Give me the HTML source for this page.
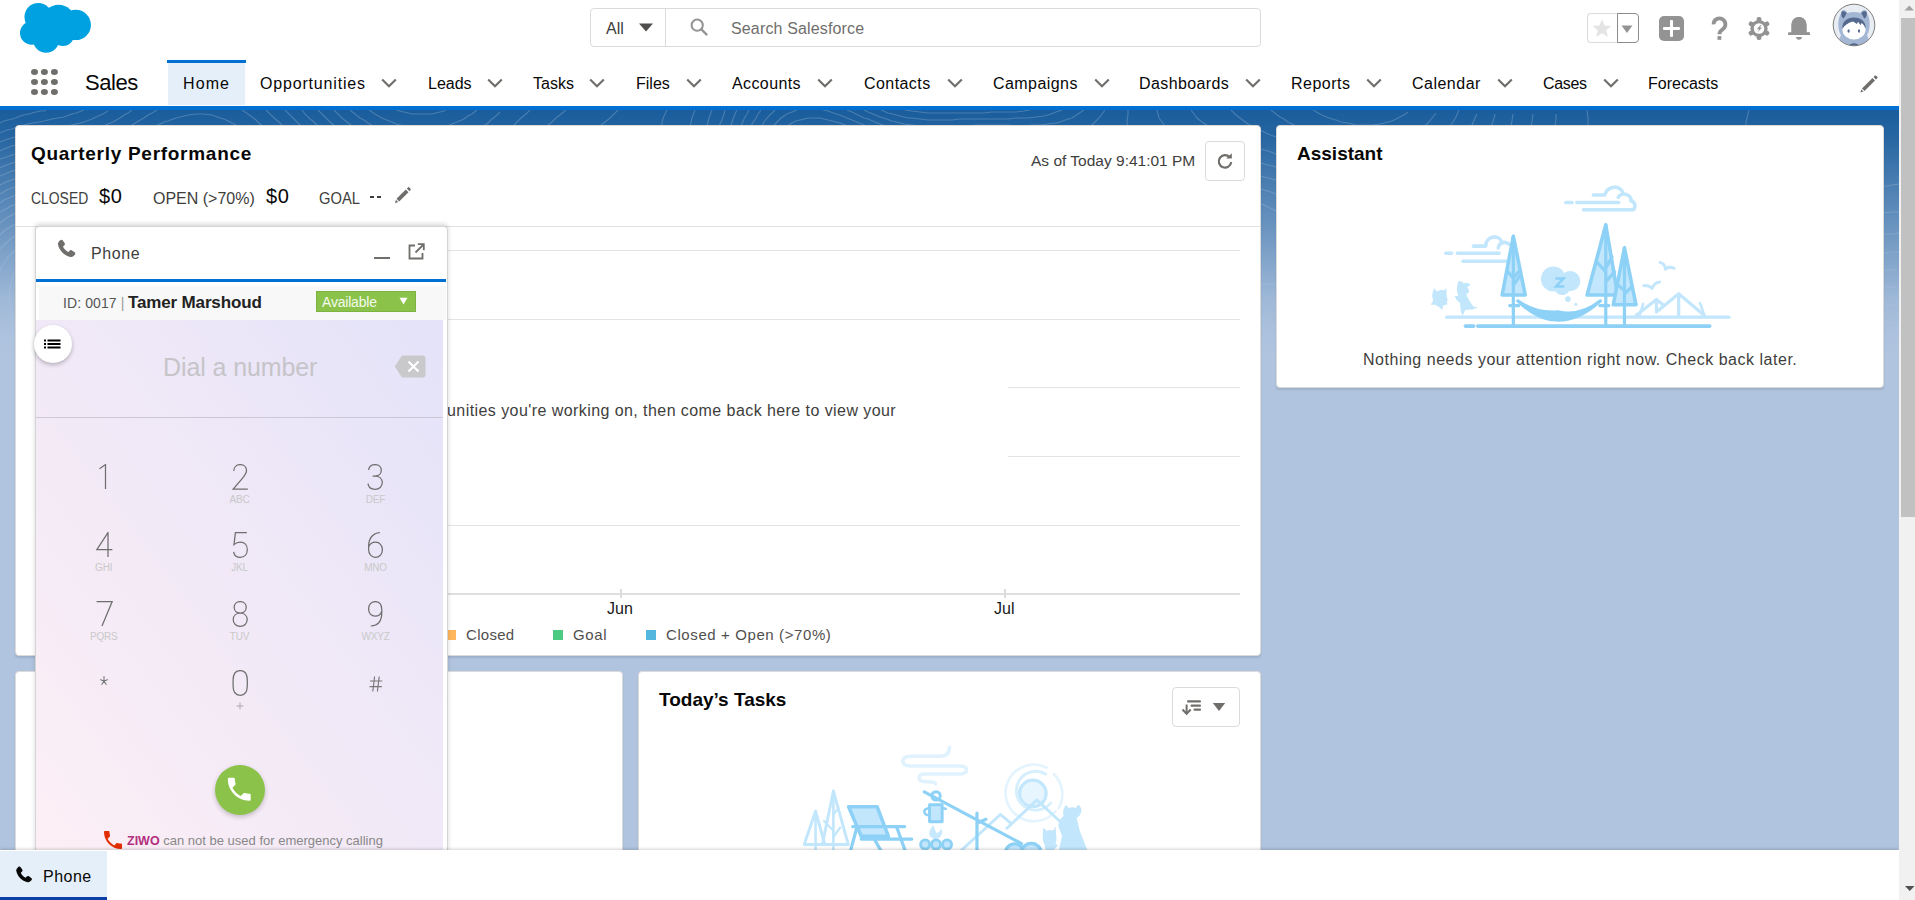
<!DOCTYPE html>
<html><head><meta charset="utf-8">
<style>
*{box-sizing:border-box;margin:0;padding:0}
html,body{width:1915px;height:900px;overflow:hidden;background:#b0c4df;font-family:"Liberation Sans",sans-serif;color:#080707}
.a{position:absolute;white-space:nowrap}
#hdr{position:absolute;left:0;top:0;width:1899px;height:106px;background:#fff}
#navline{position:absolute;left:0;top:106px;width:1899px;height:4px;background:#0070d2}
#band{position:absolute;left:0;top:110px;width:1899px;height:250px;background:#1a5d9c}
.card{position:absolute;background:#fff;border-radius:4px;border:1px solid #dddbda;box-shadow:0 2px 2px 0 rgba(0,0,0,0.1)}
#sb{position:absolute;left:1899px;top:0;width:16px;height:900px;background:#f1f1f1}
#util{position:absolute;left:0;top:850px;width:1899px;height:50px;background:#fff;box-shadow:0 -1px 3px rgba(0,0,0,0.18)}
.nv{position:absolute;top:74px;font-size:16px;line-height:20px;color:#080707;white-space:nowrap}
.chev{position:absolute;top:78px}
</style></head><body>
<div id="hdr">
 <!-- logo -->
 <svg class="a" style="left:0;top:0" width="100" height="56" viewBox="0 0 100 56">
  <g fill="#00a1e0">
   <circle cx="38.3" cy="17.4" r="13.4"/>
   <circle cx="58.6" cy="20.6" r="15.9"/>
   <circle cx="75.7" cy="24.9" r="15.2"/>
   <circle cx="31.8" cy="33" r="11.8"/>
   <circle cx="46.1" cy="39.8" r="13"/>
   <circle cx="62.9" cy="34.8" r="11.2"/>
   <rect x="30" y="18" width="42" height="22"/><circle cx="38.3" cy="16.8" r="13.8"/>
  </g>
 </svg>
 <!-- search -->
 <div class="a" style="left:590px;top:8px;width:671px;height:39px;border:1px solid #dddbda;border-radius:4px;background:#fff"></div>
 <div class="a" style="left:665px;top:9px;width:1px;height:37px;background:#dddbda"></div>
 <div class="a" style="left:606px;top:20px;font-size:16px;line-height:18px;color:#3e3e3c">All</div>
 <svg class="a" style="left:638px;top:23px" width="16" height="9" viewBox="0 0 16 9"><path d="M1 0.5H15L8 8.5Z" fill="#514f4d"/></svg>
 <svg class="a" style="left:690px;top:18px" width="18" height="18" viewBox="0 0 18 18"><circle cx="7.2" cy="7.2" r="5.6" fill="none" stroke="#939393" stroke-width="2"/><path d="M11.2 11.2L16.5 16.5" stroke="#939393" stroke-width="2.4" stroke-linecap="round"/></svg>
 <div class="a" style="left:731px;top:20px;font-size:16px;line-height:18px;color:#706e6b;letter-spacing:0.15px">Search Salesforce</div>
 <!-- right icons -->
 <div class="a" style="left:1587px;top:13px;width:31px;height:30px;border:1px solid #dddbda;border-right:none;border-radius:4px 0 0 4px;background:#fff"></div>
 <div class="a" style="left:1617px;top:13px;width:22px;height:30px;border:1px solid #8c8c8c;border-radius:0 4px 4px 0;background:#fff"></div>
 <svg class="a" style="left:1592px;top:18px" width="20" height="20" viewBox="0 0 20 20"><path d="M10 1.2L12.6 7.6L19.4 8L14.2 12.3L15.9 19L10 15.2L4.1 19L5.8 12.3L0.6 8L7.4 7.6Z" fill="#e4e4e4"/></svg>
 <svg class="a" style="left:1621px;top:25px" width="12" height="9" viewBox="0 0 12 9"><path d="M0.5 0.5H11.5L6 8Z" fill="#939393"/></svg>
 <div class="a" style="left:1659px;top:16px;width:25px;height:25px;background:#939393;border-radius:5px"></div>
 <div class="a" style="left:1663px;top:27px;width:17px;height:3px;background:#fff;border-radius:1px"></div>
 <div class="a" style="left:1670px;top:20px;width:3px;height:17px;background:#fff;border-radius:1px"></div>
 <svg class="a" style="left:1708px;top:15px" width="22" height="26" viewBox="0 0 22 26"><path d="M5.6 9.4A5.9 5.9 0 1 1 14.6 14.3C12.6 15.6 11.4 16.6 11.4 19.2" fill="none" stroke="#939393" stroke-width="3.8"/><rect x="9.5" y="21.1" width="3.8" height="3.7" fill="#939393"/></svg>
 <svg class="a" style="left:1747px;top:16px" width="24" height="25" viewBox="0 0 24 25">
  <g fill="#939393"><circle cx="12" cy="12.5" r="8.6"/>
  <rect x="9.6" y="1" width="4.8" height="5" rx="2"/><rect x="9.6" y="19" width="4.8" height="5" rx="2"/>
  <rect x="9.6" y="1" width="4.8" height="5" rx="2" transform="rotate(60 12 12.5)"/><rect x="9.6" y="19" width="4.8" height="5" rx="2" transform="rotate(60 12 12.5)"/>
  <rect x="9.6" y="1" width="4.8" height="5" rx="2" transform="rotate(-60 12 12.5)"/><rect x="9.6" y="19" width="4.8" height="5" rx="2" transform="rotate(-60 12 12.5)"/></g>
  <circle cx="12" cy="12.5" r="5.3" fill="#fff"/><path d="M13.6 8.9L9.8 13.3H12.2L10.6 16.2L15.1 11.6H12.7L14.6 8.9Z" fill="#939393"/>
 </svg>
 <svg class="a" style="left:1787px;top:16px" width="24" height="25" viewBox="0 0 24 25"><path d="M4.5 18.5V9.5C4.5 4.5 7.5 1 12 1C16.5 1 19.5 4.5 19.5 9.5V18.5H22.8V17.5C22.8 16.8 22.3 16.2 21.5 16.2H20.6V18.5Z" fill="#939393"/><path d="M4.5 9.5C4.5 4.5 7.5 1 12 1C16.5 1 19.5 4.5 19.5 9.5V16.2H22C22.5 16.2 23 16.7 23 17.3V19H1V17.3C1 16.7 1.5 16.2 2 16.2H4.5Z" fill="#939393"/><path d="M9 21H15C15 22.5 13.7 23.8 12 23.8C10.3 23.8 9 22.5 9 21Z" fill="#939393"/></svg>
 <svg class="a" style="left:1832px;top:3px" width="44" height="44" viewBox="0 0 44 44">
  <defs><clipPath id="avc"><circle cx="22" cy="22" r="20.5"/></clipPath></defs>
  <circle cx="22" cy="22" r="20.5" fill="#e8ecf3"/>
  <g clip-path="url(#avc)">
   <path d="M6 44C6 38 8 35 9 32C5.5 26 5.5 17 8.5 11.5L9.5 8C10.5 6.5 12.5 6.5 14 8L15.5 10C19.5 8.8 24.5 8.8 28.5 10L30 8C31.5 6.5 33.5 6.5 34.5 8L35.5 11.5C38.5 17 38.5 26 35 32C36 35 38 38 38 44Z" fill="#a3b6d4"/>
   <path d="M9.3 9.5C9 12.5 10 15 11.8 15.6L14.6 10.2C13 7.8 10.3 7.6 9.3 9.5Z" fill="#56698f"/>
   <path d="M34.7 9.5C35 12.5 34 15 32.2 15.6L29.4 10.2C31 7.8 33.7 7.6 34.7 9.5Z" fill="#56698f"/>
   <ellipse cx="22" cy="26.5" rx="11.6" ry="10" fill="#fff"/>
   <path d="M10.4 26C9.8 18.5 15 14.5 22 14.5C29 14.5 34.2 18.5 33.6 26C32.5 23 31.5 21 29.5 20L28.6 22.3L26 18.8L25 21L21 18.5C16.5 19.5 12.5 22 10.4 26Z" fill="#56698f"/>
   <ellipse cx="16.6" cy="28" rx="1.1" ry="1.7" fill="#56698f"/><ellipse cx="27" cy="28" rx="1.1" ry="1.7" fill="#56698f"/>
   <ellipse cx="22" cy="43.5" rx="4.5" ry="3.2" fill="#56698f"/>
  </g>
  <circle cx="22" cy="22" r="20.8" fill="none" stroke="#706e6b" stroke-width="0.9"/>
 </svg>
 <!-- nav -->
 <svg class="a" style="left:30px;top:68px" width="29" height="28" viewBox="0 0 29 28"><g fill="#706e6b">
  <ellipse cx="4.5" cy="3.9" rx="3.5" ry="3"/><ellipse cx="14.4" cy="3.9" rx="3.5" ry="3"/><ellipse cx="24.4" cy="3.9" rx="3.5" ry="3"/>
  <ellipse cx="4.5" cy="13.9" rx="3.5" ry="3"/><ellipse cx="14.4" cy="13.9" rx="3.5" ry="3"/><ellipse cx="24.4" cy="13.9" rx="3.5" ry="3"/>
  <ellipse cx="4.5" cy="24" rx="3.5" ry="3"/><ellipse cx="14.4" cy="24" rx="3.5" ry="3"/><ellipse cx="24.4" cy="24" rx="3.5" ry="3"/></g></svg>
 <div class="a" style="left:85px;top:70px;font-size:22px;line-height:26px;color:#080707;letter-spacing:-0.45px">Sales</div>
 <div class="a" style="left:167px;top:60px;width:79px;height:3px;background:#0070d2"></div>
 <div class="a" style="left:168px;top:63px;width:77px;height:42px;background:#e5eff9"></div>
 <div class="nv" style="left:183px;letter-spacing:1.1px">Home</div>
 <div class="nv" style="left:260px;letter-spacing:0.82px">Opportunities</div>
 <div class="nv" style="left:428px">Leads</div>
 <div class="nv" style="left:533px">Tasks</div>
 <div class="nv" style="left:636px">Files</div>
 <div class="nv" style="left:732px;letter-spacing:0.4px">Accounts</div>
 <div class="nv" style="left:864px;letter-spacing:0.43px">Contacts</div>
 <div class="nv" style="left:993px;letter-spacing:0.44px">Campaigns</div>
 <div class="nv" style="left:1139px;letter-spacing:0.4px">Dashboards</div>
 <div class="nv" style="left:1291px;letter-spacing:0.5px">Reports</div>
 <div class="nv" style="left:1412px;letter-spacing:0.49px">Calendar</div>
 <div class="nv" style="left:1543px;letter-spacing:-0.35px">Cases</div>
 <div class="nv" style="left:1648px">Forecasts</div>
 <svg class="a" style="left:381px;top:78px" width="16" height="10" viewBox="0 0 16 10"><path d="M1.2 1.5L8 8.3L14.8 1.5" fill="none" stroke="#706e6b" stroke-width="2.1"/></svg>
 <svg class="a" style="left:487px;top:78px" width="16" height="10" viewBox="0 0 16 10"><path d="M1.2 1.5L8 8.3L14.8 1.5" fill="none" stroke="#706e6b" stroke-width="2.1"/></svg>
 <svg class="a" style="left:589px;top:78px" width="16" height="10" viewBox="0 0 16 10"><path d="M1.2 1.5L8 8.3L14.8 1.5" fill="none" stroke="#706e6b" stroke-width="2.1"/></svg>
 <svg class="a" style="left:686px;top:78px" width="16" height="10" viewBox="0 0 16 10"><path d="M1.2 1.5L8 8.3L14.8 1.5" fill="none" stroke="#706e6b" stroke-width="2.1"/></svg>
 <svg class="a" style="left:817px;top:78px" width="16" height="10" viewBox="0 0 16 10"><path d="M1.2 1.5L8 8.3L14.8 1.5" fill="none" stroke="#706e6b" stroke-width="2.1"/></svg>
 <svg class="a" style="left:947px;top:78px" width="16" height="10" viewBox="0 0 16 10"><path d="M1.2 1.5L8 8.3L14.8 1.5" fill="none" stroke="#706e6b" stroke-width="2.1"/></svg>
 <svg class="a" style="left:1094px;top:78px" width="16" height="10" viewBox="0 0 16 10"><path d="M1.2 1.5L8 8.3L14.8 1.5" fill="none" stroke="#706e6b" stroke-width="2.1"/></svg>
 <svg class="a" style="left:1245px;top:78px" width="16" height="10" viewBox="0 0 16 10"><path d="M1.2 1.5L8 8.3L14.8 1.5" fill="none" stroke="#706e6b" stroke-width="2.1"/></svg>
 <svg class="a" style="left:1366px;top:78px" width="16" height="10" viewBox="0 0 16 10"><path d="M1.2 1.5L8 8.3L14.8 1.5" fill="none" stroke="#706e6b" stroke-width="2.1"/></svg>
 <svg class="a" style="left:1497px;top:78px" width="16" height="10" viewBox="0 0 16 10"><path d="M1.2 1.5L8 8.3L14.8 1.5" fill="none" stroke="#706e6b" stroke-width="2.1"/></svg>
 <svg class="a" style="left:1603px;top:78px" width="16" height="10" viewBox="0 0 16 10"><path d="M1.2 1.5L8 8.3L14.8 1.5" fill="none" stroke="#706e6b" stroke-width="2.1"/></svg>
 <svg class="a" style="left:1859px;top:74px" width="20" height="20" viewBox="0 0 20 20"><path d="M3 14.5L13.5 4L16 6.5L5.5 17Z" fill="#706e6b"/><path d="M14.5 3L15.8 1.7C16.2 1.3 16.8 1.3 17.2 1.7L18.3 2.8C18.7 3.2 18.7 3.8 18.3 4.2L17 5.5Z" fill="#706e6b"/><path d="M2.4 15.5L4.5 17.6L1.4 18.6Z" fill="#706e6b"/></svg>
</div>
<div id="navline"></div>
<div id="band"></div>
<svg class="a" style="left:0;top:110px" width="1899" height="250" viewBox="0 0 1899 250"><g fill="none" stroke="rgba(255,255,255,0.2)" stroke-width="1.1"><path d="M975,184 980,183 985,180 989,176 992,170 993,164 992,156 990,152 988,148 984,143 980,140 973,136 968,135 960,134 952,136 948,137 943,140 939,144 936,149 935,156 936,160 940,167 944,172 948,176 952,178 956,181 964,183 968,184 975,184"/><path d="M986,196 992,193 996,191 1000,187 1004,181 1006,176 1007,168 1007,160 1005,152 1003,148 1000,142 996,136 993,132 988,128 984,125 980,123 973,120 968,119 960,118 952,118 944,120 940,120 932,123 928,124 920,128 916,130 912,132 908,136 904,144 906,152 908,156 912,161 916,166 920,171 924,175 928,179 932,182 936,185 940,188 947,192 952,194 957,196 964,198 972,198 980,198 986,196"/><path d="M985,208 992,206 996,204 1002,200 1007,196 1010,192 1013,188 1016,181 1017,176 1018,168 1017,160 1016,154 1014,148 1012,143 1008,136 1006,132 1003,128 1000,124 996,120 991,116 985,112 980,109 976,108 968,106 960,105 952,105 944,106 936,107 930,108 924,109 916,110 908,111 900,111 892,110 884,109 880,108 872,105 868,104 860,101 856,100 848,99 842,100 837,104 835,108 835,116 836,120 840,127 844,132 848,136 852,140 856,143 860,146 864,149 870,152 876,156 880,159 884,161 888,164 894,168 899,172 904,176 908,179 912,182 916,185 920,188 926,192 932,196 936,198 940,200 948,204 952,206 960,208 964,209 972,209 980,209 985,208"/><path d="M992,216 996,214 1001,212 1008,208 1012,204 1016,200 1019,196 1022,192 1024,187 1026,180 1027,172 1027,164 1025,156 1024,151 1022,144 1020,140 1016,132 1014,128 1011,124 1008,119 1004,114 1000,110 996,107 992,104 986,100 980,98 975,96 968,95 960,94 952,94 944,95 936,95 928,96 924,96 916,97 908,97 901,96 896,95 888,93 883,92 876,90 872,88 864,85 860,84 852,81 846,80 840,79 834,80 828,82 824,85 820,90 818,96 817,104 818,112 820,120 822,124 824,128 828,134 832,139 836,144 840,148 844,151 848,155 852,157 856,160 862,164 868,168 872,170 876,173 882,176 888,180 892,182 896,185 901,188 907,192 912,195 916,198 920,200 926,204 932,207 936,209 942,212 948,214 954,216 960,217 968,219 976,219 984,218 992,216"/><path d="M995,224 1000,222 1005,220 1012,216 1016,213 1020,209 1024,205 1028,200 1030,196 1032,191 1034,184 1035,176 1035,168 1034,160 1032,152 1031,148 1028,140 1027,136 1024,130 1021,124 1018,120 1016,116 1012,110 1008,105 1004,101 1000,97 996,94 992,92 984,88 980,87 972,85 964,84 960,84 952,84 948,84 940,85 932,85 924,86 916,86 908,85 900,84 896,83 888,81 884,80 876,77 872,76 864,73 860,72 852,69 848,68 840,66 832,66 824,68 820,69 816,72 812,76 808,84 807,88 806,96 806,104 807,112 808,116 811,124 813,128 816,133 820,139 824,144 827,148 831,152 835,156 839,160 844,164 848,167 852,170 856,173 861,176 868,180 872,182 876,185 881,188 888,192 892,194 896,197 901,200 908,204 912,206 916,209 922,212 928,215 932,217 939,220 944,222 950,224 956,226 964,227 972,227 980,227 988,226 995,224"/><path d="M998,232 1004,230 1008,228 1015,224 1020,221 1024,217 1028,213 1032,209 1035,204 1038,200 1040,195 1042,188 1043,180 1044,172 1043,164 1041,156 1040,152 1038,144 1036,140 1033,132 1031,128 1028,122 1025,116 1023,112 1020,107 1016,101 1012,96 1008,92 1004,88 1000,85 996,83 991,80 984,78 977,76 972,75 964,75 956,75 948,75 940,75 932,76 924,76 916,76 908,75 900,74 892,72 888,71 880,69 876,67 868,64 864,63 856,60 852,59 844,56 840,56 832,55 824,55 820,56 812,60 808,63 804,68 801,72 800,76 797,84 797,92 797,100 798,108 800,116 801,120 804,126 807,132 809,136 812,140 816,146 820,151 824,156 828,160 832,164 836,168 840,171 844,174 848,177 852,180 857,184 863,188 868,191 872,193 877,196 883,200 888,203 892,205 897,208 904,212 908,214 912,216 919,220 924,223 928,225 936,228 940,230 947,232 952,233 960,235 968,236 976,236 984,235 992,234 998,232"/><path d="M1313,0 1320,4 1324,6 1329,8 1336,10 1341,12 1348,13 1356,15 1364,15 1372,15 1380,14 1388,12 1392,11 1398,8 1404,5 1408,2"/><path d="M978,244 984,243 992,242 1000,240 1004,239 1010,236 1016,233 1020,231 1024,228 1029,224 1034,220 1037,216 1040,212 1044,206 1047,200 1049,196 1051,188 1052,180 1051,172 1050,164 1049,156 1047,152 1045,144 1043,140 1040,132 1039,128 1036,122 1033,116 1031,112 1028,105 1025,100 1023,96 1020,92 1016,86 1012,82 1008,79 1004,76 997,72 992,70 985,68 980,67 972,66 964,66 956,66 948,66 940,67 932,67 924,67 916,67 908,66 900,65 896,64 888,62 882,60 876,58 870,56 864,54 860,52 852,49 847,48 840,46 832,45 824,45 816,46 811,48 804,52 800,56 797,60 795,64 792,70 790,76 789,84 789,92 789,100 791,108 792,113 794,120 796,124 800,132 802,136 804,140 808,146 812,151 816,156 819,160 822,164 826,168 830,172 835,176 839,180 844,184 848,187 852,190 856,193 860,196 867,200 872,203 876,206 880,208 886,212 892,215 896,218 900,220 908,224 912,226 916,228 924,232 928,234 933,236 940,239 945,240 952,242 960,243 967,244 972,244 978,244"/><path d="M1271,0 1276,4 1280,7 1284,9 1288,12 1296,16 1300,18 1305,20 1312,23 1316,24 1324,27 1328,28 1336,30 1344,32 1348,32 1356,33 1364,34 1372,34 1380,34 1388,33 1392,32 1400,30 1405,28 1412,25 1416,22 1420,20 1425,16 1429,12 1432,8 1436,3"/><path d="M981,252 988,251 996,250 1001,248 1008,246 1012,244 1020,240 1024,238 1028,236 1033,232 1038,228 1042,224 1046,220 1049,216 1052,211 1055,204 1057,200 1059,192 1060,184 1060,176 1059,168 1057,160 1056,156 1054,148 1052,143 1049,136 1048,132 1045,124 1043,120 1040,113 1038,108 1036,103 1033,96 1031,92 1028,87 1024,81 1020,76 1016,72 1012,69 1008,67 1002,64 996,62 990,60 984,59 976,58 968,58 960,58 952,58 944,58 936,59 928,59 920,59 912,58 904,57 898,56 892,55 884,52 880,51 872,48 868,47 861,44 856,42 849,40 844,38 836,36 832,36 824,35 816,36 812,37 804,40 800,42 796,46 792,51 789,56 787,60 784,68 783,72 782,80 781,88 782,96 783,104 784,108 786,116 788,121 791,128 793,132 796,138 800,144 802,148 805,152 808,156 812,161 816,166 820,170 824,175 828,179 832,183 836,186 840,190 844,193 848,196 853,200 858,204 864,208 868,211 872,213 876,216 883,220 888,223 892,225 897,228 904,232 908,234 912,236 920,240 924,242 930,244 936,246 942,248 948,250 956,251 962,252"/><path d="M1231,0 1235,4 1240,8 1244,11 1248,14 1252,16 1260,20 1264,22 1268,24 1276,27 1280,29 1288,32 1292,33 1300,36 1304,37 1312,40 1316,41 1324,43 1328,44 1336,46 1344,47 1348,48 1356,49 1364,50 1372,50 1380,50 1388,50 1396,49 1400,48 1408,46 1414,44 1420,41 1424,39 1430,36 1435,32 1440,28 1444,24 1447,20 1450,16 1453,12 1456,7 1459,0"/><path d="M1015,252 1020,250 1024,248 1031,244 1036,241 1040,238 1044,235 1048,232 1052,227 1056,223 1060,217 1063,212 1064,208 1067,200 1068,195 1069,188 1069,180 1068,174 1067,168 1065,160 1064,156 1061,148 1060,144 1057,136 1055,132 1052,124 1051,120 1048,113 1046,108 1044,102 1042,96 1040,91 1037,84 1035,80 1032,75 1028,70 1024,66 1020,63 1016,60 1008,56 1004,55 996,53 992,52 984,51 976,50 968,50 960,50 952,50 944,51 936,51 928,51 920,51 912,50 904,49 897,48 892,47 884,44 880,43 872,40 868,39 861,36 856,34 850,32 844,30 836,28 832,27 824,26 816,26 808,28 804,29 798,32 793,36 789,40 786,44 783,48 780,54 778,60 776,68 775,72 775,80 775,88 776,96 776,100 778,108 780,115 782,120 784,126 787,132 789,136 792,141 796,148 799,152 801,156 804,160 808,165 812,170 816,174 820,179 824,183 828,187 832,191 836,195 840,199 844,202 848,206 852,209 856,212 861,216 867,220 872,223 876,226 880,229 886,232 892,236 896,238 900,240 908,244 912,246 916,248 924,251"/><path d="M1191,0 1194,4 1197,8 1202,12 1208,16 1212,19 1216,21 1222,24 1228,26 1232,28 1240,31 1244,33 1252,36 1256,37 1264,40 1268,41 1276,44 1280,45 1288,47 1292,48 1300,51 1304,52 1312,54 1319,56 1324,57 1332,59 1336,60 1344,62 1352,63 1360,64 1364,64 1372,65 1380,65 1388,65 1396,65 1403,64 1408,63 1416,62 1421,60 1428,58 1432,56 1439,52 1444,49 1448,46 1452,43 1456,39 1460,34 1464,29 1467,24 1470,20 1472,15 1475,8 1477,4"/><path d="M1037,252 1044,248 1048,245 1052,242 1056,239 1060,235 1064,231 1068,225 1071,220 1073,216 1076,209 1077,204 1079,196 1079,188 1078,180 1076,172 1075,168 1073,160 1072,156 1069,148 1067,144 1064,136 1063,132 1060,125 1058,120 1056,113 1054,108 1052,100 1051,96 1048,88 1047,84 1044,76 1043,72 1040,67 1036,62 1032,58 1028,55 1023,52 1016,49 1012,48 1004,46 996,44 992,44 984,43 976,43 968,43 960,43 952,43 944,43 936,44 928,44 920,44 912,43 904,42 896,40 892,39 884,37 880,36 872,33 868,31 860,28 856,27 849,24 844,22 837,20 832,19 824,17 816,17 808,18 800,20 796,22 792,24 787,28 783,32 780,37 776,43 774,48 772,53 770,60 769,68 768,76 768,84 769,92 770,100 772,108 773,112 776,120 777,124 780,130 783,136 785,140 788,145 792,151 795,156 798,160 801,164 804,168 808,173 812,178 816,183 820,187 824,192 828,196 832,200 836,204 840,208 844,212 848,216 852,219 856,222 860,226 864,229 869,232 875,236 880,239 884,242 888,244 895,248 900,251"/><path d="M1157,0 1159,8 1162,12 1165,16 1171,20 1176,23 1180,25 1185,28 1192,31 1196,32 1204,35 1208,37 1216,39 1220,41 1228,43 1232,44 1240,47 1244,48 1252,50 1258,52 1264,54 1272,56 1276,57 1284,60 1288,61 1296,63 1300,64 1308,67 1313,68 1320,70 1328,72 1332,73 1340,75 1347,76 1352,77 1360,78 1368,79 1373,80 1380,81 1388,81 1396,81 1404,81 1412,80 1416,79 1424,78 1432,76 1436,75 1443,72 1448,70 1452,67 1457,64 1462,60 1467,56 1471,52 1474,48 1477,44 1480,40 1484,33 1486,28 1488,24 1491,16 1493,12 1495,4"/><path d="M1060,252 1064,249 1068,246 1072,243 1076,239 1080,234 1084,228 1086,224 1088,219 1090,212 1091,204 1091,196 1090,188 1089,180 1088,176 1085,168 1083,164 1080,156 1079,152 1076,146 1074,140 1072,136 1069,128 1067,124 1065,116 1064,112 1062,104 1060,97 1059,92 1058,84 1056,76 1055,72 1053,64 1051,60 1048,56 1044,52 1038,48 1032,45 1028,43 1020,41 1016,40 1008,38 1000,37 992,36 988,36 980,35 972,35 964,36 956,36 952,36 944,36 936,37 928,37 920,36 914,36 908,35 900,34 892,32 888,31 880,28 876,27 868,24 864,22 858,20 852,17 848,16 840,13 836,12 828,10 820,8 816,8 809,8 804,9 796,11 792,13 787,16 782,20 778,24 775,28 772,33 769,40 767,44 764,52 764,56 762,64 762,72 762,80 762,88 763,96 764,100 766,108 768,114 770,120 772,124 776,132 778,136 780,140 784,147 787,152 790,156 792,160 796,165 800,171 804,176 807,180 810,184 813,188 817,192 820,196 824,201 828,205 832,210 836,214 840,218 844,222 848,226 852,230 856,233 860,237 864,240 870,244 875,248 880,251"/><path d="M1213,252 1212,252 1208,252 1204,251 1200,251 1196,252 1193,252"/><path d="M797,0 792,2 787,4 781,8 777,12 773,16 770,20 767,24 764,30 761,36 760,40 758,48 756,56 756,60 755,68 755,76 756,84 756,88 757,96 759,104 760,108 763,116 765,120 768,128 770,132 772,136 776,143 779,148 781,152 784,156 788,162 792,168 795,172 798,176 801,180 804,184 808,190 812,195 816,200 819,204 822,208 825,212 829,216 832,220 836,225 840,229 844,234 848,238 852,242 856,246 860,250"/><path d="M1274,252 1269,248 1264,244 1260,241 1256,239 1252,236 1244,232 1240,230 1234,228 1228,226 1220,225 1216,224 1208,223 1200,223 1192,224 1188,224 1180,225 1172,227 1167,228 1160,230 1152,232 1148,233 1140,235 1132,236 1128,236 1124,236 1119,232 1116,227 1114,220 1112,212 1111,208 1109,200 1108,196 1105,188 1103,184 1100,177 1098,172 1096,168 1092,160 1090,156 1088,152 1084,144 1082,140 1080,135 1077,128 1076,124 1073,116 1072,111 1071,104 1069,96 1069,88 1069,80 1069,72 1069,64 1068,58 1066,52 1064,48 1060,44 1053,40 1048,38 1042,36 1036,35 1028,33 1023,32 1016,31 1008,30 1000,29 992,29 984,29 976,29 968,29 960,29 952,29 944,30 936,30 928,30 920,30 912,29 906,28 900,27 892,25 888,24 880,21 876,20 868,17 864,15 857,12 852,10 847,8 840,5 836,4 828,1 823,0"/><path d="M1128,0 1128,4 1127,12 1128,17 1132,23 1136,27 1140,29 1146,32 1152,34 1156,36 1164,39 1169,40 1176,42 1182,44 1188,46 1196,48 1200,49 1208,51 1212,52 1220,54 1226,56 1232,58 1240,60 1244,61 1252,63 1256,64 1264,67 1268,68 1276,70 1282,72 1288,74 1295,76 1300,78 1308,80 1312,81 1320,84 1324,85 1332,87 1336,88 1344,90 1351,92 1356,93 1364,95 1372,96 1376,97 1384,97 1392,98 1400,99 1408,99 1416,99 1424,98 1432,97 1438,96 1444,95 1452,92 1456,91 1461,88 1468,84 1472,81 1476,78 1480,74 1484,70 1488,65 1492,60 1494,56 1497,52 1500,46 1503,40 1504,36 1507,28 1509,24 1511,16 1512,11 1513,4"/><path d="M775,0 771,4 767,8 764,12 760,19 757,24 756,28 753,36 752,40 750,48 749,56 748,64 748,72 749,80 750,88 751,96 752,100 755,108 756,112 759,120 761,124 764,131 767,136 769,140 772,145 776,152 778,156 781,160 784,164 788,170 792,176 795,180 798,184 801,188 804,193 808,198 812,204 815,208 818,212 821,216 824,221 828,226 832,232 835,236 838,240 841,244 844,248"/><path d="M1105,0 1102,4 1099,8 1095,12 1091,16 1085,20 1080,23 1074,24 1068,25 1060,25 1052,25 1044,25 1036,24 1030,24 1024,24 1016,23 1008,23 1000,22 992,22 984,22 976,22 968,22 960,22 952,23 944,23 936,23 928,23 920,23 912,22 904,21 900,20 892,18 886,16 880,14 875,12 868,9 864,8 856,4 852,2 847,0"/><path d="M1310,252 1307,248 1304,244 1300,239 1296,235 1292,230 1288,226 1284,222 1280,219 1276,216 1271,212 1264,208 1260,206 1255,204 1248,201 1243,200 1236,198 1228,197 1220,197 1212,196 1204,196 1196,197 1188,197 1180,198 1172,198 1164,198 1156,198 1148,197 1143,196 1136,193 1132,191 1128,188 1124,184 1120,180 1116,176 1112,171 1108,166 1104,160 1101,156 1099,152 1096,147 1092,140 1090,136 1088,132 1085,124 1084,120 1082,112 1080,104 1080,100 1080,93 1080,88 1082,80 1084,73 1086,68 1089,64 1092,59 1096,55 1101,52 1108,49 1116,48 1120,48 1126,48 1132,48 1140,49 1148,51 1156,52 1160,53 1168,54 1176,56 1180,57 1188,59 1193,60 1200,62 1208,64 1212,65 1220,67 1224,68 1232,70 1239,72 1244,74 1252,76 1256,77 1264,80 1268,81 1276,84 1280,85 1288,88 1292,90 1299,92 1304,94 1309,96 1316,98 1320,100 1328,103 1332,104 1340,107 1344,108 1352,110 1358,112 1364,114 1372,115 1376,116 1384,118 1392,119 1400,120 1404,121 1412,121 1420,122 1428,123 1436,123 1444,123 1452,122 1460,121 1465,120 1472,117 1476,115 1482,112 1487,108 1491,104 1495,100 1498,96 1501,92 1504,88 1508,82 1511,76 1513,72 1516,66 1519,60 1520,56 1523,48 1525,44 1527,36 1528,32 1530,24 1531,16 1532,12 1533,4"/><path d="M761,0 758,4 756,8 752,14 749,20 748,24 745,32 744,37 743,44 742,52 741,60 741,68 742,76 743,84 744,90 745,96 748,104 749,108 752,116 753,120 756,126 759,132 761,136 764,141 768,148 771,152 773,156 776,160 780,166 784,172 786,176 789,180 792,184 796,190 800,196 803,200 806,204 808,208 812,214 816,220 818,224 821,228 824,233 828,240 830,244 833,248"/><path d="M1084,0 1078,4 1072,8 1068,9 1060,12 1056,13 1048,14 1040,15 1032,15 1024,16 1016,16 1008,15 1000,15 992,15 984,15 976,15 968,16 960,16 956,16 948,16 940,17 932,17 924,16 920,16 912,15 904,14 896,12 892,11 884,8 880,7 873,4 868,2 864,0"/><path d="M1526,252 1525,244 1524,240 1523,232 1521,224 1520,217 1519,212 1518,204 1516,196 1516,192 1515,184 1515,176 1516,168 1516,164 1518,156 1520,148 1521,144 1523,136 1524,132 1527,124 1528,120 1531,112 1532,108 1535,100 1537,96 1539,88 1541,84 1543,76 1544,72 1546,64 1548,58 1549,52 1551,44 1552,39 1553,32 1554,24 1555,16 1556,9 1556,4"/><path d="M1348,252 1346,248 1344,244 1340,237 1337,232 1335,228 1332,223 1328,216 1326,212 1323,208 1320,203 1316,198 1312,193 1308,190 1304,186 1300,184 1292,180 1288,178 1280,176 1276,175 1268,174 1260,173 1252,172 1244,172 1236,172 1228,173 1220,173 1212,174 1204,174 1196,175 1188,176 1183,176 1176,176 1168,177 1160,176 1156,176 1148,174 1141,172 1136,170 1132,168 1126,164 1121,160 1117,156 1113,152 1109,148 1106,144 1104,140 1100,134 1097,128 1095,124 1093,116 1092,111 1091,104 1092,96 1093,92 1096,84 1099,80 1102,76 1107,72 1112,69 1116,67 1124,65 1132,64 1140,64 1148,64 1156,65 1164,66 1172,68 1176,68 1184,70 1192,72 1196,73 1204,75 1208,76 1216,78 1222,80 1228,82 1234,84 1240,86 1246,88 1252,90 1256,92 1264,95 1268,97 1274,100 1280,103 1284,105 1290,108 1296,111 1300,113 1305,116 1312,120 1316,123 1320,125 1326,128 1332,131 1336,133 1342,136 1348,139 1352,140 1360,143 1365,144 1372,146 1380,148 1384,149 1392,151 1397,152 1404,154 1411,156 1416,158 1421,160 1428,163 1432,165 1436,168 1441,172 1446,176 1449,180 1452,184 1456,192 1457,196 1459,204 1459,212 1459,220 1458,228 1456,236 1456,240 1454,248"/><path d="M396,0 396,0 400,1 404,2 408,3 412,4 414,4 416,4 420,4 424,4 428,4 429,4 432,4 436,3 440,2 444,1 446,0"/><path d="M749,0 747,4 744,9 741,16 740,20 737,28 736,33 735,40 734,48 734,56 734,64 734,72 735,80 736,84 738,92 740,100 741,104 744,111 746,116 748,121 751,128 754,132 756,137 760,143 763,148 765,152 768,156 772,163 776,168 778,172 781,176 784,180 788,186 792,192 794,196 797,200 800,205 804,212 806,216 809,220 812,226 815,232 817,236 820,242 823,248 824,252"/><path d="M1062,0 1056,2 1051,4 1044,6 1036,7 1028,8 1024,8 1016,8 1008,9 1000,9 992,9 984,9 976,9 968,9 960,9 952,10 944,10 936,10 928,10 920,9 912,8 908,8 900,6 893,4 888,3 881,0"/><path d="M1567,252 1567,244 1568,237 1568,232 1569,224 1570,216 1570,208 1571,200 1572,192 1572,187 1573,180 1573,172 1574,164 1575,156 1575,148 1576,142 1577,136 1578,128 1579,120 1580,112 1580,108 1581,100 1583,92 1584,84 1584,80 1585,72 1586,64 1587,56 1587,48 1587,40 1588,32 1588,24 1588,16 1588,8 1587,0"/><path d="M1749,0 1748,4 1746,12 1746,20 1747,28 1748,34 1750,40 1752,44 1756,49 1760,54 1764,57 1768,60 1774,64 1780,67 1784,69 1792,72 1796,73 1804,75 1810,76 1816,77 1824,78 1832,79 1840,79 1848,79 1856,79 1864,78 1872,78 1880,77 1887,76 1892,75 1900,74"/><path d="M1192,157 1184,158 1176,158 1168,158 1160,158 1152,157 1147,156 1140,154 1136,152 1129,148 1124,144 1120,140 1116,136 1113,132 1111,128 1108,122 1106,116 1105,108 1106,100 1108,95 1112,90 1116,86 1120,83 1128,80 1132,79 1140,78 1148,78 1156,78 1164,79 1170,80 1176,81 1184,83 1189,84 1196,86 1202,88 1208,90 1214,92 1220,95 1224,96 1232,100 1236,102 1240,105 1245,108 1250,112 1254,116 1257,120 1260,128 1256,136 1252,139 1248,142 1243,144 1236,147 1232,148 1224,150 1216,152 1212,153 1204,154 1196,156 1192,157"/><path d="M369,0 375,4 380,7 384,9 392,12 396,14 404,16 408,17 416,18 424,19 432,19 440,18 447,16 452,14 457,12 464,9 468,6 472,4 477,0"/><path d="M737,0 735,4 732,12 731,16 728,24 728,28 726,36 726,44 725,52 726,60 726,68 728,76 728,80 730,88 732,95 734,100 736,107 738,112 740,116 744,124 746,128 748,132 752,139 755,144 757,148 760,152 764,159 768,164 770,168 773,172 776,177 780,183 783,188 786,192 789,196 792,202 796,208 798,212 800,216 804,224 806,228 808,233 811,240 812,244 815,252"/><path d="M1030,0 1024,1 1016,2 1008,2 1000,2 992,2 984,3 976,3 968,3 960,3 952,3 944,3 936,3 928,3 920,2 912,1 905,0"/><path d="M1184,137 1176,138 1168,139 1160,139 1152,138 1145,136 1140,134 1136,131 1132,128 1128,123 1125,116 1126,108 1128,103 1132,99 1139,96 1144,95 1152,94 1160,94 1168,95 1172,96 1180,99 1184,100 1192,104 1196,106 1200,109 1204,113 1206,120 1204,126 1200,130 1196,132 1188,135 1184,137"/><path d="M1610,252 1612,247 1615,240 1616,236 1619,228 1621,224 1624,217 1626,212 1628,208 1631,200 1633,196 1636,190 1639,184 1641,180 1644,174 1647,168 1649,164 1652,159 1656,153 1659,148 1662,144 1665,140 1668,136 1672,131 1676,127 1680,123 1684,120 1690,116 1696,113 1700,111 1708,108 1712,107 1720,106 1728,105 1736,104 1744,104 1752,104 1760,104 1768,104 1776,105 1784,105 1792,105 1800,105 1808,106 1816,106 1824,106 1832,106 1840,106 1848,105 1856,105 1864,105 1872,104 1876,104 1884,103 1892,102 1900,102"/><path d="M540,224 544,219 546,212 546,204 544,196 542,192 538,188 532,185 524,187 521,192 520,196 520,204 521,208 524,216 527,220 531,224 536,226 540,224"/><path d="M350,0 355,4 360,8 364,10 368,13 373,16 380,20 384,22 389,24 396,27 400,28 408,31 414,32 420,33 428,34 436,35 444,34 452,33 456,32 464,28 468,27 472,24 479,20 484,16 488,13 492,9 496,6 500,2"/><path d="M725,0 724,4 721,12 719,16 718,24 716,32 716,39 716,44 716,49 716,56 717,64 719,72 720,78 721,84 724,92 725,96 728,104 730,108 732,113 735,120 737,124 740,129 744,136 746,140 749,144 752,149 756,155 759,160 762,164 765,168 768,173 772,179 775,184 778,188 780,192 784,198 788,204 790,208 792,212 796,220 797,224 800,231 802,236 804,243 805,248"/><path d="M1645,252 1648,244 1650,240 1652,236 1656,228 1658,224 1660,220 1664,213 1667,208 1669,204 1672,200 1676,194 1680,188 1683,184 1686,180 1690,176 1693,172 1697,168 1701,164 1706,160 1711,156 1716,152 1720,150 1724,147 1731,144 1736,142 1740,140 1748,137 1753,136 1760,134 1768,133 1773,132 1780,131 1788,130 1796,129 1804,129 1812,128 1817,128 1824,128 1832,127 1840,127 1848,126 1856,126 1864,125 1872,125 1880,124 1885,124 1892,124 1900,123"/><path d="M572,252 573,248 573,240 574,232 575,224 575,216 574,208 573,200 572,193 571,188 568,181 566,176 564,172 560,167 556,162 552,158 548,154 544,152 537,148 532,146 524,144 520,144 516,144 508,147 504,150 500,155 497,160 495,164 493,172 492,180 492,188 493,196 494,204 495,212 496,216 498,224 500,232 501,236 504,244 505,248"/><path d="M334,0 338,4 342,8 347,12 352,16 356,18 360,21 364,24 371,28 376,31 380,33 387,36 392,39 396,40 404,43 408,45 416,48 420,49 428,51 432,52 440,54 448,55 456,55 464,54 472,52 476,50 480,48 485,44 490,40 494,36 498,32 502,28 506,24 510,20 513,16 517,12 521,8 526,4 530,0"/><path d="M712,0 709,8 708,12 706,20 705,28 704,36 705,44 705,52 707,60 708,67 709,72 711,80 713,84 715,92 717,96 720,103 722,108 724,112 728,120 730,124 733,128 736,133 740,140 743,144 745,148 748,152 752,158 756,163 759,168 762,172 765,176 768,181 772,187 775,192 777,196 780,201 784,208 786,212 788,217 791,224 792,228 795,236 796,240 797,248"/><path d="M593,252 592,244 592,237 592,232 591,224 591,216 591,208 590,200 588,192 588,188 586,180 584,174 582,168 580,164 576,157 573,152 570,148 566,144 563,140 558,136 554,132 548,128 544,125 540,123 535,120 528,117 524,115 516,113 508,112 500,113 494,116 490,120 486,124 484,128 481,136 479,140 478,148 477,156 476,164 476,168 476,175 476,180 477,188 478,196 479,204 480,210 481,216 483,224 484,231 485,236 487,244 488,251"/><path d="M1667,252 1669,248 1672,242 1675,236 1678,232 1680,228 1684,222 1688,216 1691,212 1694,208 1697,204 1700,200 1704,195 1708,191 1712,187 1716,184 1720,180 1726,176 1731,172 1736,169 1740,167 1746,164 1752,161 1756,160 1764,157 1768,156 1776,154 1784,152 1788,151 1796,150 1804,149 1811,148 1816,147 1824,147 1832,146 1840,145 1848,145 1856,144 1860,144 1868,143 1876,143 1884,143 1892,142 1900,142"/><path d="M0,13 2,12 4,11 8,10 12,9 15,8 16,8 20,6 24,5 28,4 30,4 32,3 36,2 40,1 44,1 46,0"/><path d="M318,0 322,4 326,8 330,12 335,16 340,20 344,23 348,26 352,29 357,32 363,36 368,39 372,41 376,44 384,48 388,50 392,52 399,56 404,58 408,60 415,64 420,67 424,69 429,72 436,76 440,79 444,83 448,87 452,92 454,96 456,101 458,108 459,116 460,124 460,130 460,136 461,144 461,152 462,160 462,168 463,176 464,182 465,188 466,196 467,204 468,209 469,216 471,224 472,232 473,236 474,244 475,252"/><path d="M608,252 608,248 607,240 606,232 605,224 604,216 604,211 603,204 603,196 602,188 600,180 599,176 597,168 596,163 593,156 592,152 588,144 585,140 583,136 580,132 576,127 572,122 568,118 564,114 560,110 556,106 552,102 548,99 544,95 540,91 536,87 532,83 528,78 525,72 523,68 522,60 523,52 525,48 528,41 531,36 533,32 536,28 540,24 544,19 548,15 552,12 556,8 561,4 566,0"/><path d="M695,0 692,8 691,12 690,20 689,28 690,36 691,44 692,50 693,56 695,64 697,68 699,76 701,80 704,88 706,92 708,97 711,104 713,108 716,113 720,120 723,124 725,128 728,132 732,138 736,144 739,148 742,152 745,156 748,160 752,166 756,172 759,176 762,180 764,184 768,190 772,196 774,200 776,204 780,212 782,216 784,222 786,228 788,236 789,240 790,248"/><path d="M1684,252 1688,246 1692,240 1694,236 1697,232 1700,228 1704,222 1708,217 1712,213 1716,209 1720,205 1724,201 1728,198 1732,195 1736,192 1742,188 1748,184 1752,182 1757,180 1764,177 1768,176 1776,173 1780,172 1788,170 1796,168 1800,168 1808,166 1816,165 1824,164 1828,164 1836,163 1844,162 1852,162 1860,161 1868,161 1876,160 1884,160 1888,160 1896,160"/><path d="M0,23 7,20 12,19 20,16 24,15 32,13 39,12 44,11 52,9 58,8 64,7 72,4 76,3 84,0"/><path d="M302,0 305,4 309,8 314,12 318,16 322,20 327,24 332,28 336,31 340,34 344,37 349,40 355,44 360,47 364,50 368,52 374,56 380,59 384,62 388,64 394,68 400,72 404,75 408,77 412,80 416,84 421,88 425,92 428,96 432,102 436,108 437,112 440,119 442,124 444,132 445,136 446,144 448,152 449,156 450,164 451,172 452,176 454,184 455,192 456,198 457,204 458,212 460,220 460,224 461,232 462,240 463,248"/><path d="M622,252 620,244 619,240 618,232 617,224 616,216 616,212 615,204 615,196 614,188 613,180 612,172 612,168 610,160 608,152 607,148 605,140 603,136 600,129 598,124 595,120 592,114 588,108 586,104 583,100 580,95 576,89 573,84 571,80 568,73 567,68 566,60 567,52 568,48 572,40 575,36 579,32 583,28 588,24 592,21 596,18 600,16 605,12 610,8 614,4 618,0"/><path d="M667,0 664,6 662,12 662,20 664,27 665,32 668,39 670,44 672,49 675,56 677,60 680,66 683,72 685,76 688,83 691,88 693,92 696,97 700,104 703,108 705,112 708,116 712,122 716,127 720,132 723,136 726,140 729,144 732,148 736,153 740,158 744,164 747,168 750,172 753,176 756,180 760,187 763,192 766,196 768,200 772,208 774,212 776,217 778,224 780,230 781,236 782,244 782,252"/><path d="M1700,252 1702,248 1705,244 1708,240 1712,235 1716,230 1720,226 1724,222 1728,218 1732,215 1736,212 1741,208 1747,204 1752,201 1756,199 1762,196 1768,194 1773,192 1780,190 1786,188 1792,186 1800,185 1805,184 1812,183 1820,182 1828,181 1836,180 1840,180 1848,179 1856,178 1864,178 1872,178 1880,177 1888,177 1896,177"/><path d="M0,32 8,29 12,28 20,25 26,24 32,23 40,21 48,20 52,19 60,18 68,16 72,15 80,13 84,12 92,9 96,7 103,4 108,1"/><path d="M285,0 289,4 293,8 297,12 301,16 305,20 310,24 314,28 319,32 324,36 328,39 332,42 336,44 341,48 347,52 352,55 356,58 360,60 366,64 372,68 376,71 380,73 384,76 389,80 395,84 399,88 404,92 408,96 411,100 415,104 418,108 420,112 424,119 427,124 428,128 431,136 433,140 435,148 436,152 438,160 440,167 441,172 443,180 444,185 445,192 447,200 448,205 449,212 450,220 452,228 452,232 453,240 453,248"/><path d="M634,252 632,244 631,240 629,232 628,224 627,220 627,212 626,204 626,196 626,188 625,180 625,172 625,164 624,156 624,150 623,144 623,136 622,128 620,120 620,116 618,108 617,100 616,92 617,84 620,76 623,72 628,69 632,68 637,68 644,70 649,72 655,76 660,80 664,83 668,87 672,91 676,95 680,100 684,104 688,108 691,112 695,116 698,120 702,124 706,128 709,132 713,136 717,140 720,144 724,148 728,153 732,158 736,163 740,168 743,172 746,176 749,180 752,184 756,190 760,196 762,200 764,204 768,212 769,216 772,224 773,228 774,236 775,244 774,252"/><path d="M1714,252 1718,248 1721,244 1725,240 1729,236 1733,232 1738,228 1743,224 1748,221 1752,218 1756,216 1764,212 1768,210 1774,208 1780,206 1787,204 1792,203 1800,201 1807,200 1812,199 1820,198 1828,197 1836,197 1844,196 1848,196 1856,195 1864,195 1872,195 1880,195 1888,195 1896,195"/><path d="M0,41 4,39 12,36 16,35 24,33 30,32 36,31 44,30 52,29 56,28 64,27 72,25 79,24 84,23 92,21 96,19 104,16 108,14 113,12 120,8 124,5 128,3 132,0"/><path d="M266,0 270,4 274,8 279,12 283,16 287,20 292,24 296,28 300,31 304,34 308,37 312,40 317,44 322,48 328,52 332,55 336,58 340,60 346,64 352,68 356,71 360,73 364,76 370,80 375,84 380,88 384,91 388,94 392,98 396,102 400,106 404,111 408,116 410,120 413,124 416,130 419,136 421,140 424,148 425,152 428,160 429,164 432,172 433,176 435,184 436,190 437,196 439,204 440,209 441,216 442,224 443,232 444,240 444,244 444,252"/><path d="M647,252 644,246 642,240 640,232 639,228 638,220 637,212 637,204 637,196 637,188 637,180 638,172 639,164 640,156 641,152 642,144 644,138 646,132 649,128 652,124 659,120 664,119 670,120 676,122 681,124 688,128 692,131 696,134 700,137 704,140 709,144 713,148 717,152 721,156 725,160 729,164 733,168 736,172 740,177 744,182 748,188 751,192 753,196 756,201 759,208 761,212 764,220 765,224 767,232 767,240 767,248"/><path d="M1730,252 1734,248 1738,244 1743,240 1748,236 1752,234 1756,231 1763,228 1768,226 1772,224 1780,221 1785,220 1792,218 1800,217 1806,216 1812,215 1820,214 1828,214 1836,213 1844,213 1852,213 1860,212 1868,212 1876,212 1884,213 1892,213 1900,214"/><path d="M0,49 4,48 12,45 16,44 24,42 32,40 36,39 44,38 52,37 60,37 65,36 72,35 80,34 88,32 92,31 100,29 104,28 112,25 116,23 122,20 128,17 132,15 137,12 144,8 148,5 152,3 157,0"/><path d="M242,0 248,4 252,7 256,10 260,14 264,17 268,20 273,24 278,28 282,32 287,36 292,40 296,43 300,46 304,49 309,52 314,56 320,60 324,63 328,65 332,68 338,72 344,76 348,78 352,81 356,84 362,88 367,92 372,96 376,99 380,102 384,106 388,110 392,115 396,119 399,124 402,128 405,132 408,138 411,144 413,148 416,155 418,160 420,165 422,172 424,177 426,184 428,192 429,196 431,204 432,211 433,216 434,224 435,232 436,240 436,248"/><path d="M659,252 656,247 653,240 652,236 650,228 648,220 648,216 648,208 648,200 648,193 649,188 650,180 652,172 653,168 656,160 658,156 661,152 665,148 672,144 676,144 683,144 688,145 695,148 700,150 704,153 709,156 714,160 719,164 723,168 727,172 731,176 734,180 738,184 741,188 744,193 748,199 751,204 752,208 756,216 757,220 759,228 759,236 759,244 757,252"/><path d="M1747,252 1752,249 1756,246 1760,244 1768,240 1772,239 1780,236 1784,235 1792,233 1800,232 1804,232 1812,231 1820,231 1828,231 1836,231 1844,231 1852,231 1860,231 1868,231 1876,232 1880,232 1888,233 1896,234"/><path d="M0,58 4,56 12,53 16,52 24,50 32,48 36,48 44,47 52,46 60,45 68,45 76,44 80,44 88,42 96,41 100,40 108,38 113,36 120,33 124,32 132,28 136,26 140,24 148,20 152,18 156,16 164,12 168,11 176,8 180,7 188,5 196,4 200,4 204,4 212,5 220,8 224,9 230,12 236,15 240,17 244,20 250,24 256,28 260,31 264,34 268,37 272,40 278,44 283,48 288,51 292,54 296,57 300,60 306,64 312,68 316,70 320,73 325,76 331,80 336,83 340,86 344,89 349,92 355,96 360,100 364,103 368,106 372,110 376,113 380,117 384,122 388,126 392,131 395,136 398,140 400,144 404,151 407,156 408,160 412,168 413,172 416,180 417,184 420,192 421,196 423,204 424,211 425,216 426,224 427,232 427,240 428,248"/><path d="M672,252 670,248 667,244 664,237 662,232 660,224 659,220 659,212 659,204 659,196 660,192 662,184 664,180 668,172 672,168 676,164 680,162 688,161 696,162 701,164 708,168 712,170 716,173 720,176 724,180 728,184 732,188 736,194 740,199 743,204 745,208 748,216 749,220 750,228 751,236 749,244 748,248"/><path d="M1775,252 1780,251 1788,249 1795,248 1800,247 1808,247 1816,247 1824,248 1829,248 1836,249 1844,249 1852,250 1860,251"/><path d="M0,66 5,64 12,61 16,60 24,58 32,56 36,56 44,55 52,55 60,54 68,54 76,53 84,53 91,52 96,51 104,50 110,48 116,46 123,44 128,42 133,40 140,37 144,36 152,32 156,31 163,28 168,26 175,24 180,23 188,21 196,21 204,21 212,23 217,24 224,26 228,28 236,32 240,34 244,37 250,40 256,44 260,47 264,50 268,52 273,56 279,60 284,63 288,66 292,68 298,72 304,76 308,79 312,81 317,84 323,88 328,91 332,93 336,96 342,100 348,104 352,107 356,110 360,113 364,116 368,120 372,124 376,128 380,132 384,137 388,142 392,148 394,152 397,156 400,163 403,168 404,172 407,180 409,184 411,192 413,196 415,204 416,210 417,216 418,224 419,232 420,240 420,248"/><path d="M690,252 685,248 682,244 679,240 676,235 673,228 672,223 671,216 671,208 672,201 673,196 676,190 680,184 684,181 688,179 696,178 704,179 708,181 714,184 719,188 723,192 727,196 730,200 733,204 736,210 738,216 740,222 741,228 740,236 739,240 736,246 732,251"/><path d="M0,75 6,72 12,70 17,68 24,66 32,65 37,64 44,63 52,63 60,63 68,63 76,63 84,62 92,62 100,61 106,60 112,59 120,57 124,55 132,53 136,51 144,49 148,47 156,44 160,43 168,41 172,39 180,38 188,37 196,37 204,37 212,39 216,40 224,43 228,44 236,48 240,50 244,53 250,56 256,60 260,62 264,65 269,68 276,72 280,75 284,77 289,80 295,84 300,87 304,89 309,92 316,96 320,98 324,101 329,104 336,108 340,111 344,114 348,116 353,120 358,124 362,128 367,132 370,136 374,140 377,144 381,148 384,153 388,159 391,164 393,168 396,174 399,180 400,184 403,192 404,196 407,204 408,209 409,216 411,224 411,232 412,240 412,248"/><path d="M716,241 708,242 702,240 696,236 692,232 690,228 688,223 687,216 688,208 690,204 693,200 700,197 708,198 712,200 717,204 721,208 724,214 726,220 726,228 724,235 720,239 716,241"/><path d="M0,84 7,80 12,78 18,76 24,74 32,73 40,72 44,72 52,72 60,72 68,72 72,72 80,72 88,72 93,72 100,72 108,71 116,69 121,68 128,66 136,64 140,63 148,60 152,59 160,57 164,56 172,54 180,53 186,52 192,52 196,52 204,53 212,55 217,56 224,59 228,60 236,64 240,66 244,68 251,72 256,75 260,77 265,80 272,84 276,86 280,89 286,92 292,95 296,97 301,100 308,104 312,106 316,108 322,112 328,115 332,118 336,120 341,124 347,128 352,132 356,135 360,139 364,143 368,147 372,152 375,156 378,160 381,164 384,169 388,176 390,180 392,185 395,192 396,196 399,204 400,209 401,216 403,224 404,232 404,240 404,248"/><path d="M0,93 4,90 9,88 16,85 20,84 28,82 36,81 44,80 52,80 60,81 68,81 76,82 84,82 92,83 100,83 108,82 116,81 122,80 128,79 136,77 140,76 148,74 154,72 160,71 168,69 173,68 180,67 188,67 196,67 203,68 208,69 216,71 220,73 228,76 232,77 238,80 244,83 248,85 253,88 260,92 264,94 268,96 276,100 280,102 284,104 291,108 296,110 300,112 307,116 312,119 316,121 322,124 328,128 332,130 336,133 341,136 346,140 351,144 356,148 360,152 363,156 367,160 370,164 373,168 376,173 380,179 382,184 384,188 388,196 389,200 391,208 393,212 394,220 395,228 396,236 396,244 395,252"/><path d="M0,102 4,100 11,96 16,94 22,92 28,91 36,90 44,89 52,89 60,90 68,91 76,92 80,92 88,93 96,94 104,94 112,94 120,93 128,92 132,91 140,90 147,88 152,87 160,85 166,84 172,83 180,82 188,82 196,83 204,84 208,85 216,87 220,88 228,91 232,93 239,96 244,98 248,100 256,104 260,106 264,108 272,112 276,114 281,116 288,119 292,121 298,124 304,127 308,129 314,132 320,135 324,137 328,140 335,144 340,148 344,151 348,154 352,158 356,162 360,166 364,171 368,176 370,180 373,184 376,190 379,196 380,200 383,208 384,212 386,220 387,228 388,236 388,244 387,252"/><path d="M0,113 4,110 8,107 14,104 20,102 27,100 32,99 40,99 48,99 56,99 61,100 68,101 76,103 82,104 88,105 96,106 104,107 112,108 120,108 128,107 136,106 144,104 148,103 156,102 164,100 168,100 176,99 184,98 192,99 200,99 204,100 212,102 218,104 224,106 230,108 236,111 240,112 248,116 252,117 258,120 264,122 268,124 276,128 280,129 287,132 292,134 296,136 304,139 308,141 313,144 320,147 324,150 328,152 334,156 339,160 344,164 348,168 352,172 356,176 359,180 362,184 364,188 368,195 371,200 372,204 375,212 376,216 378,224 379,232 379,240 379,248"/><path d="M137,252 136,252 132,251 128,250 124,250 120,250 116,250 112,250 108,251 104,252 104,252"/><path d="M0,125 4,121 8,118 12,116 20,112 24,111 32,109 40,109 48,109 56,110 64,112 68,113 76,115 80,116 88,119 93,120 100,122 108,123 112,124 120,125 128,124 133,124 140,123 148,122 155,120 160,119 168,118 176,117 184,116 192,117 200,117 208,119 213,120 220,122 227,124 232,126 238,128 244,130 249,132 256,135 260,136 268,139 272,140 280,143 284,145 292,148 296,149 303,152 308,154 312,156 319,160 324,163 328,165 332,168 337,172 342,176 346,180 349,184 352,188 356,193 360,200 362,204 364,209 366,216 368,223 369,228 370,236 369,244 369,252"/><path d="M175,252 169,248 164,245 160,243 155,240 148,237 144,235 136,232 132,231 124,231 116,231 112,232 104,234 100,236 92,240 88,242 84,244 77,248 72,251"/><path d="M0,139 4,135 8,131 12,128 19,124 24,122 32,120 36,120 44,120 48,120 56,122 62,124 68,126 73,128 80,131 84,133 89,136 96,140 100,142 104,144 112,147 116,149 124,151 132,151 140,150 146,148 152,146 159,144 164,143 172,141 176,140 184,139 192,138 200,139 208,140 212,140 220,142 228,144 232,145 240,147 244,148 252,150 259,152 264,153 272,156 276,157 284,159 288,160 296,163 300,165 308,168 312,170 316,172 323,176 328,180 332,183 336,186 340,190 344,195 347,200 350,204 352,208 355,216 357,220 358,228 359,236 359,244 358,252"/><path d="M204,252 200,249 196,245 192,242 188,239 184,236 179,232 174,228 169,224 164,220 160,217 156,215 152,212 145,208 140,206 135,204 128,203 120,204 116,205 110,208 104,211 100,214 96,217 91,220 86,224 81,228 76,232 72,234 68,237 64,240 58,244 52,247 48,249 41,252"/><path d="M12,252 12,252 8,249 6,248 4,246 2,244 0,242"/><path d="M0,161 2,156 5,152 8,147 12,143 16,140 22,136 28,134 36,133 44,133 52,135 56,137 62,140 68,144 72,147 76,150 80,154 84,160 87,164 88,168 90,176 89,184 88,189 85,196 82,200 80,204 76,209 72,213 68,217 64,221 60,224 55,228 48,232 44,234 39,236 32,237 24,237 19,236 12,232 8,228 5,224 3,220 0,214"/><path d="M234,252 229,248 225,244 220,240 216,236 212,232 209,228 205,224 202,220 199,216 196,212 192,206 189,200 188,196 187,188 188,182 192,177 196,174 200,172 208,169 216,168 224,168 232,168 240,169 248,170 256,171 264,172 268,172 276,174 284,176 288,177 296,179 300,180 308,184 312,186 316,188 322,192 327,196 331,200 334,204 337,208 340,213 343,220 345,224 346,232 346,240 345,248"/><path d="M32,216 27,216 20,213 16,209 13,204 11,200 9,192 9,184 10,176 12,169 14,164 17,160 21,156 28,152 32,151 40,151 44,152 51,156 56,160 59,164 61,168 63,176 63,184 61,192 59,196 56,201 52,206 48,210 44,212 36,216 32,216"/><path d="M267,252 263,248 258,244 255,240 252,236 248,230 245,224 244,217 244,214 246,208 249,204 256,200 260,199 268,197 276,196 284,197 292,198 298,200 304,202 308,204 313,208 318,212 321,216 324,220 327,228 328,232 328,240 328,244 325,252"/></g></svg>
<div class="a" style="left:0;top:110px;width:1899px;height:250px;background:linear-gradient(to bottom,rgba(176,196,223,0) 0px,rgba(176,196,223,0.08) 26px,rgba(176,196,223,0.4) 90px,rgba(176,196,223,0.68) 146px,rgba(176,196,223,0.89) 190px,rgba(176,196,223,0.98) 226px,rgba(176,196,223,1) 245px)"></div>
<div class="card" style="left:15px;top:125px;width:1246px;height:531px"></div>
<div class="card" style="left:1276px;top:125px;width:608px;height:263px"></div>
<div class="card" style="left:15px;top:671px;width:608px;height:300px"></div>
<div class="card" style="left:638px;top:671px;width:623px;height:300px"></div>

<!-- QP card content -->
<div class="a" style="left:31px;top:142px;font-size:19px;line-height:24px;font-weight:bold;letter-spacing:0.72px;color:#080707">Quarterly Performance</div>
<div class="a" style="left:1031px;top:152px;font-size:15.5px;line-height:18px;color:#3e3e3c;letter-spacing:0px">As of Today 9:41:01 PM</div>
<div class="a" style="left:1205px;top:141px;width:40px;height:40px;border:1px solid #dddbda;border-radius:4px;background:#fff"></div>
<svg class="a" style="left:1216px;top:152px" width="18" height="18" viewBox="0 0 18 18"><path d="M13.6 5.2A6.2 6.2 0 1 0 15.2 10" fill="none" stroke="#706e6b" stroke-width="2.2"/><path d="M10.2 6.6L15.8 6.6L15.8 1.2Z" fill="#706e6b"/></svg>
<div class="a" style="left:31px;top:190px;font-size:16px;line-height:18px;color:#3e3e3c;transform:scaleX(0.87);transform-origin:0 0">CLOSED</div>
<div class="a" style="left:99px;top:184px;font-size:20px;line-height:24px;color:#080707;letter-spacing:0.6px">$0</div>
<div class="a" style="left:153px;top:190px;font-size:16px;line-height:18px;color:#3e3e3c;letter-spacing:0px">OPEN (&gt;70%)</div>
<div class="a" style="left:266px;top:184px;font-size:20px;line-height:24px;color:#080707;letter-spacing:0.6px">$0</div>
<div class="a" style="left:319px;top:190px;font-size:16px;line-height:18px;color:#3e3e3c;transform:scaleX(0.92);transform-origin:0 0">GOAL</div>
<div class="a" style="left:370px;top:196px;width:4px;height:1.6px;background:#3e3e3c"></div>
<div class="a" style="left:377px;top:196px;width:4px;height:1.6px;background:#3e3e3c"></div>
<svg class="a" style="left:394px;top:186px" width="18" height="18" viewBox="0 0 18 18"><path d="M2.5 12.8L11.8 3.5L14.5 6.2L5.2 15.5Z" fill="#706e6b"/><path d="M12.8 2.5L13.9 1.4C14.3 1 14.9 1 15.3 1.4L16.6 2.7C17 3.1 17 3.7 16.6 4.1L15.5 5.2Z" fill="#706e6b"/><path d="M1.9 13.8L4.2 16.1L1 17.2Z" fill="#706e6b"/></svg>
<div class="a" style="left:16px;top:226px;width:1244px;height:1px;background:#e6e1e1"></div>
<!-- chart grid -->
<div class="a" style="left:40px;top:250px;width:1200px;height:1px;background:#e3e3e3"></div>
<div class="a" style="left:40px;top:319px;width:1200px;height:1px;background:#e3e3e3"></div>
<div class="a" style="left:1008px;top:387px;width:232px;height:1px;background:#e3e3e3"></div>
<div class="a" style="left:1008px;top:456px;width:232px;height:1px;background:#e3e3e3"></div>
<div class="a" style="left:40px;top:525px;width:1200px;height:1px;background:#e3e3e3"></div>
<div class="a" style="left:40px;top:593px;width:1200px;height:2px;background:#dedede"></div>
<div class="a" style="left:620px;top:589px;width:1.5px;height:9px;background:#dcdcdc"></div>
<div class="a" style="left:1004px;top:589px;width:1.5px;height:9px;background:#dcdcdc"></div>
<div class="a" style="left:607px;top:600px;font-size:16px;line-height:18px;color:#181818">Jun</div>
<div class="a" style="left:994px;top:600px;font-size:16px;line-height:18px;color:#181818">Jul</div>
<div class="a" style="left:447px;top:401px;font-size:16px;line-height:20px;color:#3e3e3c;letter-spacing:0.43px">unities you're working on, then come back here to view your</div>
<div class="a" style="left:446px;top:630px;width:10px;height:10px;background:#ffb75d"></div>
<div class="a" style="left:466px;top:626px;font-size:15px;line-height:18px;color:#514f4d;letter-spacing:0.3px">Closed</div>
<div class="a" style="left:553px;top:630px;width:10px;height:10px;background:#4bca81"></div>
<div class="a" style="left:573px;top:626px;font-size:15px;line-height:18px;color:#514f4d;letter-spacing:0.6px">Goal</div>
<div class="a" style="left:646px;top:630px;width:10px;height:10px;background:#54b7dd"></div>
<div class="a" style="left:666px;top:626px;font-size:15px;line-height:18px;color:#514f4d;letter-spacing:0.6px">Closed + Open (&gt;70%)</div>
<!-- Assistant -->
<div class="a" style="left:1297px;top:142px;font-size:19px;line-height:24px;font-weight:bold;color:#080707">Assistant</div>
<div class="a" style="left:1363px;top:350px;font-size:16px;line-height:20px;color:#3e3e3c;letter-spacing:0.52px">Nothing needs your attention right now. Check back later.</div>

<svg class="a" style="left:1420px;top:175px" width="320" height="160" viewBox="0 0 1800 900">
 <g fill="none" stroke-linecap="round" stroke-linejoin="round">
  <!-- top right cloud -->
  <g stroke="#c2e6fc" stroke-width="20">
   <path d="M975 112H1040A55 55 0 0 1 1140 95"/>
   <path d="M1115 125A40 40 0 0 1 1188 145"/>
   <path d="M1188 145A30 30 0 0 1 1200 195H920"/>
   <path d="M820 155H855M882 155H1118"/>
  </g>
  <!-- left cloud -->
  <g stroke="#c2e6fc" stroke-width="20">
   <path d="M300 400H370A48 48 0 0 1 462 378"/>
   <path d="M440 410A35 35 0 0 1 500 390"/>
   <path d="M145 440H178M210 440H445M242 485H490"/>
  </g>
  <!-- ground -->
  <path d="M150 800H1738" stroke="#c2e6fc" stroke-width="18"/>
  <path d="M255 850H302M325 850H1630" stroke="#8dd1f6" stroke-width="20"/>
  <!-- mountains -->
  <path d="M1215 790L1330 700L1330 770L1455 668L1600 790M1330 700L1365 728M1455 668V790" stroke="#c2e6fc" stroke-width="18"/>
  <path d="M1235 790L1255 725M1575 720L1600 790" stroke="#c2e6fc" stroke-width="14"/>
  <!-- birds -->
  <path d="M1350 492Q1378 500 1380 530Q1400 510 1430 525" stroke="#c2e6fc" stroke-width="16"/>
  <path d="M1258 622Q1290 620 1305 638Q1320 605 1348 602" stroke="#c2e6fc" stroke-width="16"/>
  <!-- trees -->
  <path d="M525 345L462 675H592Z" fill="#c2e6fc" stroke="#8dd1f6" stroke-width="20"/>
  <path d="M525 345V840M495 545L525 580L555 545M525 620L560 570" stroke="#8dd1f6" stroke-width="18"/>
  <path d="M1045 280L940 675H1112Z" fill="#c2e6fc" stroke="#8dd1f6" stroke-width="20"/>
  <path d="M1045 280V840M995 490L1045 545M1045 525L1080 460M1045 600L1095 545" stroke="#8dd1f6" stroke-width="18"/>
  <path d="M1150 410L1087 730H1215Z" fill="#c2e6fc" stroke="#8dd1f6" stroke-width="20"/>
  <path d="M1150 410V840M1150 670L1190 630M1115 620L1150 650" stroke="#8dd1f6" stroke-width="18"/>
  <!-- hammock -->
  <path d="M505 735H555M1012 735H1062" stroke="#8dd1f6" stroke-width="18"/>
  <path d="M550 708Q775 925 1015 708Q900 800 775 770Q650 780 550 708Z" fill="#8dd1f6" stroke="#8dd1f6" stroke-width="18"/>
 </g>
 <!-- zz cloud -->
 <g fill="#c2e6fc"><circle cx="750" cy="585" r="70"/><circle cx="845" cy="597" r="57"/><circle cx="800" cy="630" r="45"/><circle cx="832" cy="698" r="16"/><circle cx="876" cy="727" r="9"/></g>
 <path d="M762 582H808L765 627H812" fill="none" stroke="#8dd1f6" stroke-width="14"/>
 <!-- cat & kid silhouettes -->
 <g fill="#c2e6fc">
  <path d="M80 635L95 655Q120 640 135 650L148 635L150 680Q160 700 150 720L158 725L130 735L125 760L110 745L85 730L60 730L75 705Q60 680 80 635Z"/>
  <path d="M215 600Q230 590 245 610Q270 600 285 620L265 630Q290 660 260 670Q270 700 300 740L325 745L300 755L255 760L240 790L230 770L225 720Q200 700 195 680L215 680Q200 640 215 600Z"/>
 </g>
</svg>
<!-- Today's tasks -->
<div class="a" style="left:659px;top:688px;font-size:19px;line-height:24px;font-weight:bold;color:#080707">Today’s Tasks</div>
<div class="a" style="left:1172px;top:687px;width:68px;height:40px;border:1px solid #dddbda;border-radius:4px;background:#fff"></div>
<svg class="a" style="left:1182px;top:699px" width="20" height="17" viewBox="0 0 20 17"><g fill="#706e6b"><rect x="5" y="1.3" width="14" height="2.2" rx="1"/><rect x="8.5" y="5.5" width="10.5" height="2.2" rx="1"/><rect x="11.5" y="9.5" width="7.5" height="2.2" rx="1"/><rect x="3.6" y="5.5" width="2" height="9"/></g><path d="M0.5 10.5L4.6 14.8L8.7 10.5" fill="none" stroke="#706e6b" stroke-width="2"/></svg>
<svg class="a" style="left:1212px;top:702px" width="14" height="10" viewBox="0 0 14 10"><path d="M0.8 1H13.2L7 9Z" fill="#706e6b"/></svg>


<svg class="a" style="left:790px;top:740px" width="310" height="115" viewBox="0 0 1915 710">
 <g fill="none" stroke-linecap="round" stroke-linejoin="round">
  <!-- smoke -->
  <path d="M985 45Q985 100 930 100H745Q697 100 697 130Q697 160 745 160H1045Q1090 160 1090 185Q1090 210 1045 210H835Q797 210 797 235Q797 258 850 258Q900 258 900 272" stroke="#dff2fe" stroke-width="22"/>
  <!-- sun -->
  <circle cx="1500" cy="330" r="82" fill="#e6f5fe" stroke="#c2e6fc" stroke-width="20"/>
  <path d="M1610 390A120 120 0 1 1 1580 210" stroke="#d6effd" stroke-width="18"/>
  <path d="M1640 440A175 175 0 1 1 1585 170M1630 210A175 175 0 0 1 1660 420" stroke="#e3f4fe" stroke-width="16"/>
  <!-- left trees -->
  <path d="M158 440L88 645H215Z" stroke="#c2e6fc" stroke-width="18"/>
  <path d="M158 440V680M268 315V680" stroke="#c2e6fc" stroke-width="16"/>
  <path d="M268 315L200 645H360Z" stroke="#c2e6fc" stroke-width="18"/>
  <path d="M210 500L268 560M268 460L300 420M268 600L310 540" stroke="#c2e6fc" stroke-width="14"/>
  <!-- mountains -->
  <path d="M1060 680L1300 460L1360 510M1340 545L1525 370L1665 500" stroke="#c2e6fc" stroke-width="18"/>
  <!-- chair -->
  <path d="M440 440L375 680M525 620L560 680M660 540L710 680" stroke="#8dd1f6" stroke-width="20"/>
  <path d="M362 412H538L608 595H440Z" fill="#c2e6fc" stroke="#8dd1f6" stroke-width="22"/>
  <path d="M388 535H708M440 612H752" stroke="#8dd1f6" stroke-width="20"/>
  <!-- kettle & fire -->
  <path d="M885 525Q850 565 865 595Q885 620 915 608Q950 590 935 545Q925 570 905 575Q895 555 885 525Z" fill="#c8e9fd" stroke="none"/>
  <circle cx="902" cy="345" r="26" stroke="#8dd1f6" stroke-width="18"/>
  <path d="M862 400H940V505H862Z" fill="#c2e6fc" stroke="#8dd1f6" stroke-width="18"/>
  <path d="M862 420Q825 425 830 445Q835 470 862 460M940 420L962 425" stroke="#8dd1f6" stroke-width="16"/>
  <circle cx="835" cy="645" r="28" fill="#c2e6fc" stroke="#8dd1f6" stroke-width="18"/><circle cx="902" cy="645" r="28" fill="#c2e6fc" stroke="#8dd1f6" stroke-width="18"/><circle cx="970" cy="645" r="28" fill="#c2e6fc" stroke="#8dd1f6" stroke-width="18"/>
  <!-- spit -->
  <path d="M830 320L1430 640M1155 452V680M1165 510L1210 490" stroke="#8dd1f6" stroke-width="20"/>
  <!-- rocks -->
  <path d="M1330 700A58 58 0 0 1 1446 700Z" fill="#c2e6fc" stroke="#8dd1f6" stroke-width="20"/><path d="M1428 700A62 62 0 0 1 1552 700Z" fill="#c2e6fc" stroke="#8dd1f6" stroke-width="20"/>
 </g>
 <g fill="#c2e6fc">
  <path d="M1565 540L1585 560Q1610 550 1625 560L1640 535L1645 590Q1650 620 1640 640L1655 650L1630 680H1580L1570 640Q1555 610 1565 540Z"/>
  <path d="M1705 400L1720 420Q1745 410 1765 420L1780 400Q1800 410 1800 440Q1795 470 1770 480L1790 560L1840 690H1660L1680 590L1660 540Q1650 500 1690 470Q1680 430 1705 400Z"/>
 </g>
</svg>
<!-- phone panel -->
<div class="a" style="left:35px;top:226px;width:413px;height:640px;background:#fff;border:1px solid #d4d4d4;border-radius:4px 4px 0 0;box-shadow:0 -2px 4px rgba(0,0,0,0.16)"></div>
<svg class="a" style="left:56px;top:239px" width="20" height="20" viewBox="0 0 20 20"><path d="M4.2 1.2C5 0.4 6.2 0.5 6.8 1.4L8.6 4C9.1 4.8 9 5.9 8.2 6.5L7 7.4C7.8 9.7 10.2 12.2 12.6 13L13.5 11.8C14.1 11 15.2 10.9 16 11.4L18.6 13.2C19.5 13.8 19.6 15 18.8 15.8L17.6 17C16.8 17.8 15.6 18.2 14.4 18C8.2 16.6 3.4 11.8 2 5.6C1.8 4.4 2.2 3.2 3 2.4Z" fill="#706e6b"/></svg>
<div class="a" style="left:91px;top:245px;font-size:16px;line-height:18px;color:#3e3e3c;letter-spacing:0.6px">Phone</div>
<div class="a" style="left:374px;top:257px;width:16px;height:2px;background:#706e6b"></div>
<svg class="a" style="left:408px;top:243px" width="17" height="17" viewBox="0 0 17 17"><path d="M7 2.5H1.5V15.5H14.5V10" fill="none" stroke="#706e6b" stroke-width="1.8"/><path d="M7.5 9.5L15 2" fill="none" stroke="#706e6b" stroke-width="1.8"/><path d="M9.8 1.2H15.8V7.2" fill="none" stroke="#706e6b" stroke-width="1.8"/></svg>
<div class="a" style="left:36px;top:279px;width:410px;height:3px;background:#0070d2"></div>
<div class="a" style="left:39px;top:286px;width:407px;height:34px;background:#f8f8f8"></div>
<div class="a" style="left:63px;top:295px;font-size:14px;line-height:17px;color:#555"><span style="letter-spacing:0.1px">ID: 0017</span> <span style="color:#999">|</span></div>
<div class="a" style="left:128px;top:292px;font-size:17px;line-height:22px;font-weight:bold;color:#222;letter-spacing:-0.15px">Tamer Marshoud</div>
<div class="a" style="left:316px;top:291px;width:100px;height:21px;background:#8bc34a;border:1px solid #7cb342"></div>
<div class="a" style="left:322px;top:294px;font-size:14px;line-height:16px;color:#f4faec;letter-spacing:-0.2px">Available</div>
<svg class="a" style="left:399px;top:297px" width="9" height="8" viewBox="0 0 9 8"><path d="M0.5 0.8H8.5L4.5 7.5Z" fill="#fff"/></svg>
<div class="a" style="left:36px;top:320px;width:407px;height:546px;background:linear-gradient(to top right,#fdeff5 0%,#f1e9f7 50%,#e4e3f9 100%)"></div>
<div class="a" style="left:36px;top:417px;width:407px;height:1px;background:#cdc8d6"></div>
<div class="a" style="left:163px;top:352px;font-size:25px;line-height:30px;color:#c6c4c8;letter-spacing:-0.1px">Dial a number</div>
<svg class="a" style="left:394px;top:355px" width="32" height="23" viewBox="0 0 32 23"><path d="M8 0.5H29C30.4 0.5 31.5 1.6 31.5 3V20C31.5 21.4 30.4 22.5 29 22.5H8L0.8 11.5Z" fill="#c9c9cb"/><path d="M14.5 6.5L24.5 16.5M24.5 6.5L14.5 16.5" stroke="#fff" stroke-width="2.2"/></svg>
<div class="a" style="left:34px;top:325px;width:38px;height:38px;border-radius:50%;background:#fff;box-shadow:0 2px 4px rgba(0,0,0,0.25)"></div>
<svg class="a" style="left:44px;top:339px" width="17" height="10" viewBox="0 0 17 10"><g fill="#000"><rect x="0" y="0.5" width="2" height="2"/><rect x="0" y="4" width="2" height="2"/><rect x="0" y="7.5" width="2" height="2"/><rect x="3.5" y="0.5" width="13" height="2"/><rect x="3.5" y="4" width="13" height="2"/><rect x="3.5" y="7.5" width="13" height="2"/></g></svg>
<div class="a" style="left:209.5px;top:494px;width:60px;text-align:center;font-size:10px;line-height:12px;color:#c9c9c9;letter-spacing:-0.2px">ABC</div>
<div class="a" style="left:345.5px;top:494px;width:60px;text-align:center;font-size:10px;line-height:12px;color:#c9c9c9;letter-spacing:-0.2px">DEF</div>
<div class="a" style="left:73.7px;top:562px;width:60px;text-align:center;font-size:10px;line-height:12px;color:#c9c9c9;letter-spacing:-0.2px">GHI</div>
<div class="a" style="left:209.5px;top:562px;width:60px;text-align:center;font-size:10px;line-height:12px;color:#c9c9c9;letter-spacing:-0.2px">JKL</div>
<div class="a" style="left:345.5px;top:562px;width:60px;text-align:center;font-size:10px;line-height:12px;color:#c9c9c9;letter-spacing:-0.2px">MNO</div>
<div class="a" style="left:73.7px;top:631px;width:60px;text-align:center;font-size:10px;line-height:12px;color:#c9c9c9;letter-spacing:-0.2px">PQRS</div>
<div class="a" style="left:209.5px;top:631px;width:60px;text-align:center;font-size:10px;line-height:12px;color:#c9c9c9;letter-spacing:-0.2px">TUV</div>
<div class="a" style="left:345.5px;top:631px;width:60px;text-align:center;font-size:10px;line-height:12px;color:#c9c9c9;letter-spacing:-0.2px">WXYZ</div>

<svg class="a" style="left:95.7px;top:464.4px" width="17" height="26" viewBox="0 0 17 26"><path d="M3.5 4.8L9.5 0.6V25" fill="none" stroke="#6e6e6e" stroke-width="1.25"/></svg>
<svg class="a" style="left:231.5px;top:464.4px" width="17" height="26" viewBox="0 0 17 26"><path d="M1.8 7C1.8 3.2 4.5 0.6 8.2 0.6C11.8 0.6 14.5 3 14.5 6.6C14.5 9.6 12.6 11.8 10.2 14.6L1.2 25H15.8" fill="none" stroke="#6e6e6e" stroke-width="1.25"/></svg>
<svg class="a" style="left:366.7px;top:464.4px" width="17" height="26" viewBox="0 0 17 26"><path d="M1.6 6C2 2.7 4.6 0.6 8.1 0.6C11.8 0.6 14.3 2.9 14.3 6.3C14.3 9.7 11.6 12.1 7.8 12.1H5.6M7.8 12.1C12.3 12.1 15.3 14.6 15.3 18.6C15.3 22.6 12.2 25.3 8.1 25.3C4.2 25.3 1.4 23 1 19.6" fill="none" stroke="#6e6e6e" stroke-width="1.25"/></svg>
<svg class="a" style="left:95.7px;top:532.4px" width="17" height="26" viewBox="0 0 17 26"><path d="M12 25V0.6L0.8 17.6H16.4" fill="none" stroke="#6e6e6e" stroke-width="1.25"/></svg>
<svg class="a" style="left:231.5px;top:532.4px" width="17" height="26" viewBox="0 0 17 26"><path d="M14.8 0.6H3.4L2 12.6C3.6 11.1 5.6 10.2 8.3 10.2C12.6 10.2 15.3 13.2 15.3 17.6C15.3 22.2 12.6 25.3 8.3 25.3C4.8 25.3 2.2 23.3 1.6 19.8" fill="none" stroke="#6e6e6e" stroke-width="1.25"/></svg>
<svg class="a" style="left:366.7px;top:532.4px" width="17" height="26" viewBox="0 0 17 26"><path d="M12.8 0.6C6.2 1 1.6 6 1.6 14.2V17.2C1.6 22.2 4.6 25.3 8.4 25.3C12.3 25.3 15.4 22.3 15.4 17.8C15.4 13.3 12.5 10.2 8.7 10.2C5.2 10.2 2.7 12.2 1.6 15" fill="none" stroke="#6e6e6e" stroke-width="1.25"/></svg>
<svg class="a" style="left:95.7px;top:601.4px" width="17" height="26" viewBox="0 0 17 26"><path d="M0.6 0.6H16.2L6 25" fill="none" stroke="#6e6e6e" stroke-width="1.25"/></svg>
<svg class="a" style="left:231.5px;top:601.4px" width="17" height="26" viewBox="0 0 17 26"><path d="M8.2 12.1C4.7 12.1 2.2 9.6 2.2 6.3C2.2 2.9 4.7 0.6 8.2 0.6C11.7 0.6 14.2 2.9 14.2 6.3C14.2 9.6 11.7 12.1 8.2 12.1C4.2 12.1 1.2 14.6 1.2 18.6C1.2 22.6 4.2 25.3 8.2 25.3C12.2 25.3 15.2 22.6 15.2 18.6C15.2 14.6 12.2 12.1 8.2 12.1Z" fill="none" stroke="#6e6e6e" stroke-width="1.25"/></svg>
<svg class="a" style="left:366.7px;top:601.4px" width="17" height="26" viewBox="0 0 17 26"><path d="M14.8 10.2C13.8 13.2 11.3 15.2 8.2 15.2C4.2 15.2 1.6 12.2 1.6 8C1.6 3.6 4.3 0.6 8.2 0.6C12.2 0.6 14.8 3.6 14.8 8.7V11.2C14.8 19.7 10.8 24.7 3.8 25" fill="none" stroke="#6e6e6e" stroke-width="1.25"/></svg>
<svg class="a" style="left:231.5px;top:670.4px" width="17" height="26" viewBox="0 0 17 26"><path d="M8.2 0.6C12.7 0.6 15.3 4.1 15.3 10.1V15.8C15.3 21.8 12.7 25.3 8.2 25.3C3.7 25.3 1.1 21.8 1.1 15.8V10.1C1.1 4.1 3.7 0.6 8.2 0.6Z" fill="none" stroke="#6e6e6e" stroke-width="1.25"/></svg>
<svg class="a" style="left:99px;top:675px" width="10" height="11" viewBox="0 0 10 11"><path d="M5 1.2V6.2M5 6.2L1.2 4.6M5 6.2L8.8 4.6M5 6.2L2.6 9.8M5 6.2L7.4 9.8" fill="none" stroke="#777" stroke-width="1.1"/></svg>
<svg class="a" style="left:369px;top:676px" width="14" height="16" viewBox="0 0 14 16"><path d="M5.6 0.5L3.8 15.5M10.2 0.5L8.4 15.5M1 5H13.2M0.6 10.6H12.8" fill="none" stroke="#777" stroke-width="1.15"/></svg>
<svg class="a" style="left:235.5px;top:701.5px" width="8" height="8" viewBox="0 0 8 8"><path d="M4 0.5V7.5M0.5 4H7.5" fill="none" stroke="#aaa" stroke-width="1"/></svg>
<div class="a" style="left:215px;top:765px;width:50px;height:50px;border-radius:50%;background:#8bc34a;box-shadow:0 2px 5px rgba(0,0,0,0.22)"></div>
<svg class="a" style="left:224.4px;top:774px" width="30.5" height="30.5" viewBox="0 0 24 24"><path d="M6.62 10.79c1.44 2.83 3.76 5.14 6.59 6.59l2.2-2.2c.27-.27.67-.36 1.02-.24 1.12.37 2.33.57 3.57.57.55 0 1 .45 1 1V20c0 .55-.45 1-1 1-9.39 0-17-7.61-17-17 0-.55.45-1 1-1h3.5c.55 0 1 .45 1 1 0 1.25.2 2.45.57 3.57.11.35.03.74-.25 1.02l-2.2 2.2z" fill="#fff"/></svg>
<svg class="a" style="left:101px;top:828px" width="24" height="24" viewBox="0 0 24 24"><path d="M6.62 10.79c1.44 2.83 3.76 5.14 6.59 6.59l2.2-2.2c.27-.27.67-.36 1.02-.24 1.12.37 2.33.57 3.57.57.55 0 1 .45 1 1V20c0 .55-.45 1-1 1-9.39 0-17-7.61-17-17 0-.55.45-1 1-1h3.5c.55 0 1 .45 1 1 0 1.25.2 2.45.57 3.57.11.35.03.74-.25 1.02l-2.2 2.2z" fill="#e22d00"/></svg>
<div class="a" style="left:127px;top:833px;font-size:13px;line-height:15px;color:#888"><span style="color:#b2307f;font-weight:bold;font-size:12.5px">ZIWO</span> can not be used for emergency calling</div>
<div id="util"></div>
<div class="a" style="left:0;top:851px;width:107px;height:47px;background:#e5eff9"></div>
<div class="a" style="left:0;top:897px;width:107px;height:3px;background:#0b3fa8"></div>
<svg class="a" style="left:14px;top:866px" width="19" height="18" viewBox="0 0 20 20"><path d="M4.2 1.2C5 0.4 6.2 0.5 6.8 1.4L8.6 4C9.1 4.8 9 5.9 8.2 6.5L7 7.4C7.8 9.7 10.2 12.2 12.6 13L13.5 11.8C14.1 11 15.2 10.9 16 11.4L18.6 13.2C19.5 13.8 19.6 15 18.8 15.8L17.6 17C16.8 17.8 15.6 18.2 14.4 18C8.2 16.6 3.4 11.8 2 5.6C1.8 4.4 2.2 3.2 3 2.4Z" fill="#080707"/></svg>
<div class="a" style="left:43px;top:868px;font-size:16px;line-height:18px;color:#080707;letter-spacing:0.5px">Phone</div>
<div id="sb"></div>
<svg class="a" style="left:1901px;top:0" width="16" height="17" viewBox="0 0 16 17"><path d="M3.5 10.5H13L8.25 5.5Z" fill="#a3a3a3"/></svg>
<div class="a" style="left:1901px;top:18px;width:14px;height:499px;background:#c1c1c1"></div>
<svg class="a" style="left:1901.5px;top:883px" width="16" height="17" viewBox="0 0 16 17"><path d="M3 3H12.5L7.75 8Z" fill="#505050"/></svg>
</body></html>
